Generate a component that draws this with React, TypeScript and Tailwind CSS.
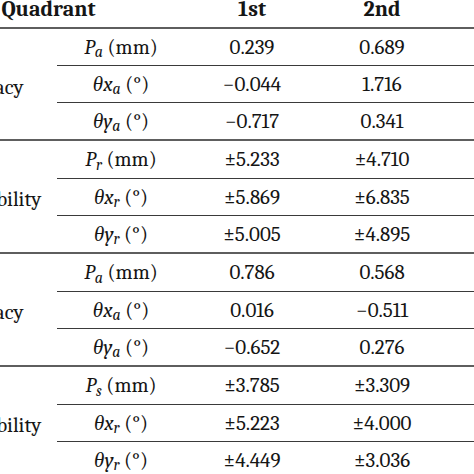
import React from "react";

type Row = { p: React.ReactNode; a: string; b: string };

const Deg = () => <span>(°)</span>;

const P = ({ s }: { s: string }) => (
  <span>
    <span className="italic">P</span>
    <sub className="italic">{s}</sub> (mm)
  </span>
);

const Th = ({ v, s }: { v: string; s: string }) => (
  <span>
    <span className="italic">θ{v}</span>
    <sub className="italic">{s}</sub> <Deg />
  </span>
);

const groups: { label: string; rows: Row[] }[] = [
  {
    label: "Accuracy",
    rows: [
      { p: <P s="a" />, a: "0.239", b: "0.689" },
      { p: <Th v="x" s="a" />, a: "−0.044", b: "1.716" },
      { p: <Th v="y" s="a" />, a: "−0.717", b: "0.341" },
    ],
  },
  {
    label: "Repeatability",
    rows: [
      { p: <P s="r" />, a: "±5.233", b: "±4.710" },
      { p: <Th v="x" s="r" />, a: "±5.869", b: "±6.835" },
      { p: <Th v="y" s="r" />, a: "±5.005", b: "±4.895" },
    ],
  },
  {
    label: "Accuracy",
    rows: [
      { p: <P s="a" />, a: "0.786", b: "0.568" },
      { p: <Th v="x" s="a" />, a: "0.016", b: "−0.511" },
      { p: <Th v="y" s="a" />, a: "−0.652", b: "0.276" },
    ],
  },
  {
    label: "Repeatability",
    rows: [
      { p: <P s="s" />, a: "±3.785", b: "±3.309" },
      { p: <Th v="x" s="r" />, a: "±5.223", b: "±4.000" },
      { p: <Th v="y" s="r" />, a: "±4.449", b: "±3.036" },
    ],
  },
];

const DataRow = ({ r, h }: { r: Row; h: string }) => (
  <div className={`flex items-center ${h}`}>
    <div className="w-[128px] text-center whitespace-nowrap">{r.p}</div>
    <div className="w-[134px] text-center">{r.a}</div>
    <div className="w-[126px] text-center">{r.b}</div>
  </div>
);

export default function App() {
  return (
    <div className="w-[474px] h-[474px] overflow-hidden bg-white text-[21px] leading-none text-[#151515] font-serif">
      <div className="-ml-[88px] -mt-[9px] w-[562px]">
        <div className="flex h-[36px] items-center text-[22px] font-bold">
          <div className="w-[273px] text-center">Quadrant</div>
          <div className="w-[134px] text-center">1st</div>
          <div className="w-[126px] text-center">2nd</div>
        </div>
        {groups.map((g, gi) => (
          <div key={gi}>
            <div className="h-[2px] bg-[#5e5e5e]" />
            <div className="flex">
              <div className="w-[145px] flex items-center justify-center pt-[6px]">
                {g.label}
              </div>
              <div className="flex-1 flex flex-col">
                <DataRow r={g.rows[0]} h={gi === 0 ? "h-[36px]" : "h-[37px]"} />
                <div className="h-px bg-[#3a3a3a]" />
                <DataRow r={g.rows[1]} h="h-[36px]" />
                <div className="h-px bg-[#3a3a3a]" />
                <DataRow r={g.rows[2]} h="h-[36px]" />
              </div>
            </div>
          </div>
        ))}
      </div>
    </div>
  );
}
